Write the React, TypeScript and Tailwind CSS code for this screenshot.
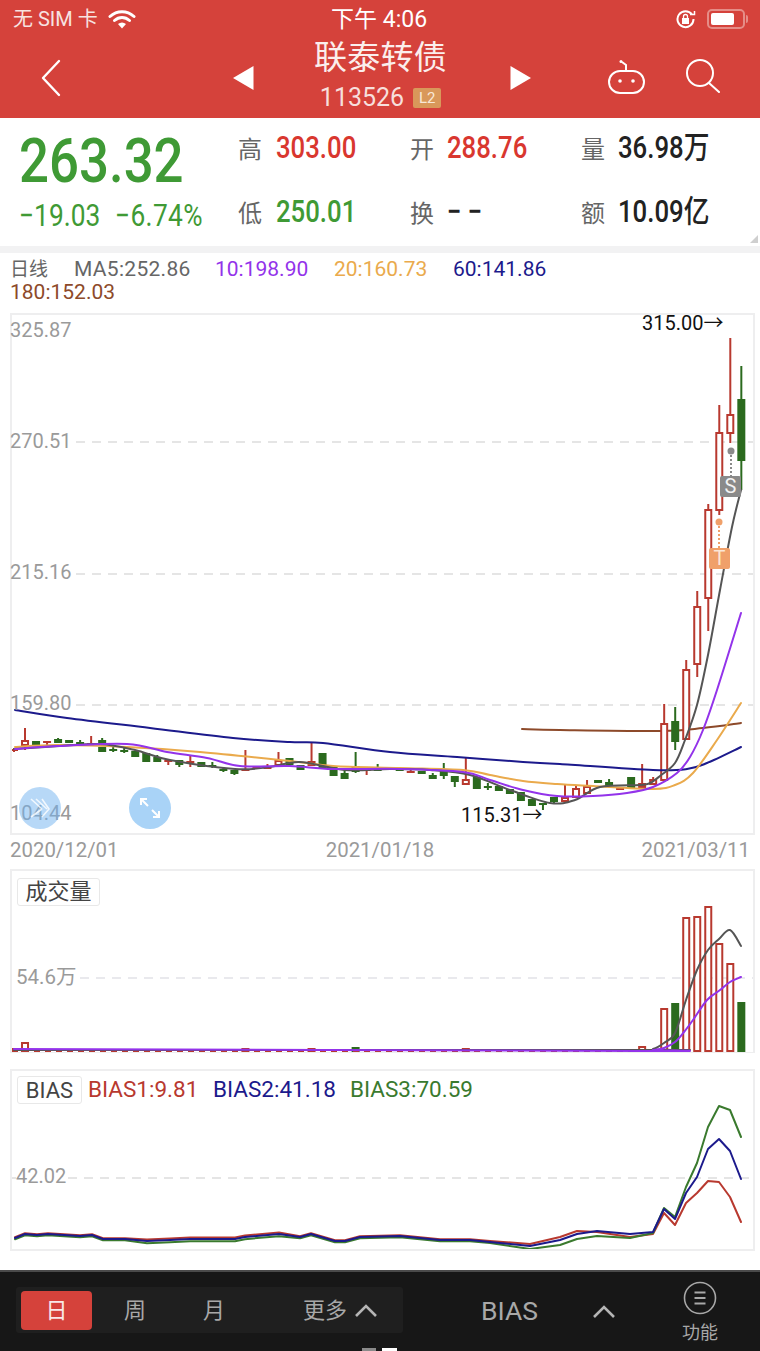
import React from "react";

type C = [number, "r" | "g" | "h", number, number, number, number];
// index, kind, wickTop, bodyTop, bodyBot, wickBot
const candles: C[] = [
  [0,"r",748,749,751,752],[1,"h",728,741,745,750],[2,"g",741,741,745,745],[3,"r",741,741,743,745],
  [4,"g",738,739,743,743],[5,"g",740,740,743,743],[6,"g",740,742,743,746],[7,"r",736,743,744,744],
  [8,"g",738,740,744,744],[8,"g",747,747,752,752],[9,"g",747,749,750,752],[10,"g",748,750,751,753],
  [11,"g",751,751,757,757],[12,"g",753,753,762,762],[13,"g",755,757,762,762],[14,"r",760,760,761,765],
  [15,"g",760,760,765,767],[16,"r",755,761,763,767],[17,"g",762,762,767,767],[18,"g",762,765,766,768],
  [19,"g",767,769,770,772],[20,"g",770,770,774,775],[21,"r",750,769,771,771],[22,"r",766,767,768,769],
  [23,"r",764,767,768,768],[24,"h",752,761,765,765],[25,"g",758,758,765,765],[26,"g",765,765,770,770],
  [27,"r",743,761,766,766],[28,"g",753,753,768,768],[29,"g",767,767,776,776],[30,"g",770,773,779,779],
  [31,"g",752,766,772,773],[32,"r",769,769,771,775],[33,"g",764,769,770,771],[34,"g",768,768,769,769],
  [35,"g",769,769,770,770],[36,"r",769,771,773,773],[37,"g",771,771,774,774],[38,"g",773,775,779,779],
  [39,"g",763,771,776,779],[40,"g",776,776,782,787],[41,"h",758,780,784,784],[42,"g",776,777,789,789],
  [43,"g",783,786,787,790],[44,"g",786,786,791,791],[45,"g",789,789,794,794],[46,"g",792,792,801,801],
  [47,"g",799,799,806,806],[48,"g",803,803,804,810],[49,"g",797,797,802,804],[50,"h",784,798,801,801],
  [51,"h",786,789,797,797],[52,"h",780,787,793,793],[53,"g",780,780,783,783],[54,"g",779,782,786,786],
  [55,"r",788,788,789,789],[56,"g",777,777,789,789],[57,"r",764,783,788,788],[58,"h",777,780,784,784],
  [59,"h",704,724,780,780],[60,"g",707,721,742,750],[61,"h",660,670,739,739],[62,"h",591,607,664,677],
  [63,"h",504,510,598,631],[64,"h",405,433,510,515],[65,"h",338,415,433,443],[66,"g",366,399,461,490],
];
const X = (i: number) => 14 + 11.02 * i;
const RED = "#b8392f";
const GREEN = "#2b6a1e";

const ma5 = "14,749 60,746 100,744 135,750 170,760 235,769 270,767 300,762 345,770 390,769 430,770 470,775 510,790 550,803 575,800 600,787 640,785 650,783 660,776 675,763 685,740 697,705 708,655 720,590 732,527 741,490";
const ma10 = "15,749 57,746 127,744 167,752 207,758 240,766 290,766 333,769 400,769 463,772 490,780 523,790 557,796 593,796 627,793 653,787 677,773 690,757 703,730 717,690 741,613";
const ma20 = "15,747 57,745 127,747 200,752 290,761 333,766 400,768 463,770 490,775 523,781 557,784 593,786 653,789 675,785 693,773 717,740 741,703";
const ma60 = "15,710 67,718 150,728 233,738 290,742 323,743 390,752 457,757 523,762 560,764 653,770 687,769 707,763 741,747";
const ma180 = "522,729 560,730 660,731 703,728 741,723";

const volBars: [number, "h" | "g", number][] = [
  [59,"h",1009],[60,"g",1003],[61,"h",918],[62,"h",917],[63,"h",907],[64,"h",944],[65,"h",964],[66,"g",1002],
  [57,"h",1047],[1,"h",1043],[0,"h",1049],[21,"h",1049],[27,"h",1049],[31,"g",1047],[41,"h",1049],
];
const volGray = "14,1050 640,1050 653,1049 664,1043 675,1033 686,1000 697,970 708,950 719,939 730,930 741,946";
const volPurple = "14,1049 640,1051 653,1050 664,1048 675,1042 684,1032 693,1020 707,1000 720,990 730,982 741,977";

const leftPts: [number, number][] = [[15,1238],[25,1234],[37,1235],[48,1234],[80,1236],[92,1235],[103,1239],[125,1239],[147,1241],[170,1240],[190,1239],[235,1239],[245,1237],[279,1234],[300,1237],[311,1234],[335,1241],[345,1241],[360,1237],[400,1236],[440,1240],[470,1240]];
const left = (d: number) =>
  leftPts.map(([x, y]) => `${x},${y + (x > 130 && x < 300 ? d * 1.8 : d)}`).join(" ") + " ";
const b3 = left(1.2) + "490,1243 530,1249 560,1245 577,1239 597,1236 630,1238 653,1233 664,1208 675,1217 686,1187 697,1163 708,1127 719,1106 730,1110 741,1137";
const b2 = left(0) + "490,1242 530,1246 560,1240 577,1234 597,1231 630,1234 653,1232 664,1209 675,1219 686,1193 697,1177 708,1149 719,1139 730,1151 741,1179";
const b1 = left(-0.8) + "490,1241 530,1244 560,1237 577,1231 597,1232 630,1237 653,1234 664,1213 675,1225 686,1203 697,1193 708,1181 719,1182 730,1197 741,1222";

function smooth(pts: string) {
  const p = pts.trim().split(" ").map((s) => s.split(",").map(Number));
  let d = `M${p[0][0]} ${p[0][1]}`;
  for (let i = 0; i < p.length - 1; i++) {
    const a = p[Math.max(i - 1, 0)], b = p[i], c = p[i + 1], e = p[Math.min(i + 2, p.length - 1)];
    d += `C${b[0] + (c[0] - a[0]) / 6} ${b[1] + (c[1] - a[1]) / 6} ${c[0] - (e[0] - b[0]) / 6} ${c[1] - (e[1] - b[1]) / 6} ${c[0]} ${c[1]}`;
  }
  return d;
}

function Curve({ pts, color, w = 2 }: { pts: string; color: string; w?: number }) {
  return <path d={smooth(pts)} fill="none" stroke={color} strokeWidth={w} strokeLinecap="round" />;
}
function Line({ pts, color, w = 2 }: { pts: string; color: string; w?: number }) {
  return <polyline points={pts} fill="none" stroke={color} strokeWidth={w} strokeLinejoin="round" strokeLinecap="round" />;
}

function Quote({ label, value, color, narrow }: { label: string; value: string; color: string; narrow?: boolean }) {
  return (
    <div className="flex items-center h-[64px] mt-[-2px] mb-[2px]">
      <span className={`${narrow ? "w-[37px]" : "w-[38px]"} text-[24px] text-[#666666] mt-[4px]`}>{label}</span>
      <span className={`text-[31px] font-medium origin-left scale-x-[0.83] whitespace-nowrap ${color}`}>{value}</span>
    </div>
  );
}

export default function App() {
  return (
    <div className="relative w-[760px] h-[1351px] bg-white overflow-hidden flex flex-col font-['Roboto','Noto_Sans_CJK_SC',sans-serif]">
      {/* Header */}
      <header className="h-[118px] bg-[#d5423b] text-white flex flex-col shrink-0">
        <div className="h-[38px] flex items-center justify-between pl-[13px] pr-[12px] relative">
          <div className="flex items-center gap-[10px]">
            <span className="text-[20px] text-[#f7e3e1]">无 SIM 卡</span>
            <svg width="28" height="22" viewBox="0 0 28 22" fill="none" stroke="#fff" strokeLinecap="round">
              <path d="M2 8.5C9 2 19 2 26 8.5" strokeWidth="3" />
              <path d="M6.5 12.5C11 8.5 17 8.5 21.5 12.5" strokeWidth="3" />
              <path d="M14 20.5l-4-4.5c2.5-2 5.5-2 8 0z" fill="#fff" stroke="none" />
            </svg>
          </div>
          <span className="absolute left-[331px] top-[6px] text-[23px] leading-[27px] whitespace-nowrap">下午 4:06</span>
          <div className="flex items-center gap-[11px]">
            <svg width="21" height="20" viewBox="0 0 21 20" fill="none" stroke="#fff" strokeWidth="2">
              <path d="M17 5.5A8 8 0 1 0 18.5 10" />
              <path d="M15 5.5h4.5V2" strokeWidth="1.5" />
              <rect x="7" y="9" width="7" height="6" fill="#fff" stroke="none" />
              <path d="M8.5 9V7.5a2 2 0 0 1 4 0V9" strokeWidth="1.3" />
            </svg>
            <div className="flex items-center">
              <div className="w-[38px] h-[20px] rounded-[5px] border-2 border-[#e58d87] p-[2px]">
                <div className="w-[23px] h-full rounded-[2px] bg-white" />
              </div>
              <div className="w-[2px] h-[8px] ml-[1px] rounded-r bg-[#e58d87]" />
            </div>
          </div>
        </div>
        <div className="flex-1 flex items-center relative">
          <svg className="ml-[40px]" width="22" height="38" viewBox="0 0 22 38" fill="none" stroke="#fff" strokeWidth="2.4" strokeLinecap="round" strokeLinejoin="round">
            <path d="M19 2L3 19l16 17" />
          </svg>
          <svg className="ml-[171px]" width="21" height="24" viewBox="0 0 21 24" fill="#fff"><path d="M20.5 0v24L0 12z" /></svg>
          <div className="w-[256px] flex flex-col items-center pr-[3px]">
            <span className="text-[33px] leading-[38px] mt-[-6px] tracking-[0.3px] whitespace-nowrap text-[#fbeeed]">联泰转债</span>
            <div className="flex items-center gap-[9px] mt-[7px]">
              <span className="text-[25px] leading-[28px] text-[#f7dfdc]">113526</span>
              <span className="w-[28px] h-[20px] bg-[#d9985a] rounded-[2px] text-[15px] leading-[20px] text-center text-[#f8e8d8]">L2</span>
            </div>
          </div>
          <svg width="21" height="24" viewBox="0 0 21 24" fill="#fff"><path d="M.5 0v24L21 12z" /></svg>
          <svg className="ml-[76px] mt-[-2px]" width="40" height="36" viewBox="0 0 40 36" fill="none" stroke="#fff" strokeWidth="2">
            <rect x="2" y="12" width="35" height="22" rx="11" />
            <path d="M19 12V6l-4-3" />
            <circle cx="14" cy="2.5" r="1.5" fill="#fff" stroke="none" />
            <circle cx="13" cy="22" r="1.8" fill="#fff" stroke="none" />
            <circle cx="26" cy="22" r="1.8" fill="#fff" stroke="none" />
          </svg>
          <svg className="ml-[38px] mt-[-4px]" width="36" height="34" viewBox="0 0 36 34" fill="none" stroke="#fff" strokeWidth="2" strokeLinecap="round">
            <circle cx="15" cy="14" r="13" />
            <path d="M24 24l10 9" />
          </svg>
        </div>
      </header>

      {/* Quote */}
      <section className="h-[128px] shrink-0 relative flex">
        <div className="w-[238px] pl-[19px] shrink-0">
          <div className="text-[61px] leading-[62px] mt-[12px] font-medium text-[#3f9a35] origin-left scale-x-[0.865] whitespace-nowrap">263.32</div>
          <div className="flex text-[31px] leading-[32px] mt-[8px] text-[#3f9a35] origin-left scale-x-[0.85] whitespace-nowrap">
            <span className="w-[113px]">−19.03</span>
            <span className="tracking-[0.4px]">−6.74%</span>
          </div>
        </div>
        <div className="w-[172px] shrink-0">
          <Quote label="高" value="303.00" color="text-[#d9372f]" />
          <Quote label="低" value="250.01" color="text-[#3f9a35]" />
        </div>
        <div className="w-[171px] shrink-0">
          <Quote narrow label="开" value="288.76" color="text-[#d9372f]" />
          <Quote narrow label="换" value="− −" color="text-[#222222]" />
        </div>
        <div className="flex-1">
          <Quote narrow label="量" value="36.98万" color="text-[#222222]" />
          <Quote narrow label="额" value="10.09亿" color="text-[#222222]" />
        </div>
        <div className="absolute right-[2px] bottom-[3px] w-0 h-0 border-l-[8px] border-l-transparent border-b-[8px] border-b-[#cfcfcf]" />
      </section>
      <div className="h-[7px] bg-[#f2f2f3] shrink-0" />

      {/* Legend */}
      <div className="h-[60px] shrink-0 pl-[10px] pt-[5px] text-[21px] leading-[23px] whitespace-nowrap">
        <div className="flex">
          <span className="w-[64px] text-[19px] text-[#666666]">日线</span>
          <span className="w-[141px] text-[#666666] tracking-[0.3px]">MA5:252.86</span>
          <span className="w-[119px] text-[#9333ea]">10:198.90</span>
          <span className="w-[119px] text-[#eaaa4c]">20:160.73</span>
          <span className="text-[#1c1a8c]">60:141.86</span>
        </div>
        <div className="text-[#8d4a2a]">180:152.03</div>
      </div>

      {/* Price chart */}
      <div className="relative ml-[10px] w-[745px] h-[522px] shrink-0 border-2 border-[#eeeeef] text-[20px] leading-[24px] text-[#9a9a9a]">
        <svg width="741" height="518" viewBox="12 315 741 518" className="block">
          <g stroke="#dddddd" strokeWidth="1.5" strokeDasharray="9 7">
            <line x1="76" x2="753" y1="442" y2="442" />
            <line x1="76" x2="753" y1="574" y2="574" />
            <line x1="76" x2="753" y1="705" y2="705" />
          </g>
          <Curve pts={ma180} color="#8d4a2a" />
          {candles.map(([i, k, wt, bt, bb, wb], n) => {
            const c = k === "g" ? GREEN : RED;
            const x = X(i);
            return (
              <g key={n}>
                <line x1={x} x2={x} y1={wt} y2={wb} stroke={c} strokeWidth="2" />
                {k === "h" ? (
                  <rect x={x - 3} y={bt} width={6} height={bb - bt} fill="#fff" stroke={c} strokeWidth="2" />
                ) : (
                  <rect x={x - 4} y={bt} width={8} height={Math.max(bb - bt, 2)} fill={c} />
                )}
              </g>
            );
          })}
          <Curve pts={ma60} color="#1c1a8c" />
          <Curve pts={ma20} color="#eaaa4c" />
          <Curve pts={ma5} color="#555555" />
          <Curve pts={ma10} color="#9333ea" />
          <line x1="731" x2="731" y1="451" y2="476" stroke="#8a8a8a" strokeWidth="2" strokeDasharray="2 2" />
          <circle cx="731" cy="451" r="3.5" fill="#8a8a8a" />
          <line x1="719" x2="719" y1="522" y2="548" stroke="#f0a06a" strokeWidth="2" strokeDasharray="2 2" />
          <circle cx="719" cy="522" r="3.5" fill="#f0a06a" />
        </svg>
        <span className="absolute left-[-2px] top-[3px]">325.87</span>
        <span className="absolute left-[-2px] top-[114px]">270.51</span>
        <span className="absolute left-[-2px] top-[245px]">215.16</span>
        <span className="absolute left-[-2px] top-[376px]">159.80</span>
        <span className="absolute left-[-2px] top-[486px]">104.44</span>
        <span className="absolute left-[630px] top-[-4px] text-[20px] text-[#111111] whitespace-nowrap">315.00→</span>
        <span className="absolute left-[449px] top-[488px] text-[20px] text-[#111111] whitespace-nowrap">115.31→</span>
        <span className="absolute left-[708px] top-[161px] w-[21px] h-[21px] rounded-[2px] bg-[#8a8a8a] text-[#f2f2f2] text-[20px] leading-[21px] text-center">S</span>
        <span className="absolute left-[697px] top-[233px] w-[21px] h-[21px] rounded-[2px] bg-[#f0a06a] text-[#fbe6d6] text-[20px] leading-[21px] text-center">T</span>
        <div className="absolute left-[7px] top-[472px] w-[42px] h-[42px] rounded-full bg-[#6fb2f0]/50 flex items-center justify-center">
          <svg width="24" height="24" viewBox="0 0 24 24" fill="none" stroke="#fff" strokeOpacity="0.8" strokeWidth="1.6">
            <path d="M3 3l11 10M8 3l11 10M3 21L14 13M14 3l7 10-7 8" />
          </svg>
        </div>
        <div className="absolute left-[117px] top-[472px] w-[42px] h-[42px] rounded-full bg-[#a9d3f7] flex items-center justify-center">
          <svg width="24" height="24" viewBox="0 0 24 24" fill="none" stroke="#fff" strokeWidth="2">
            <path d="M3 9V3h6M3 3l7 7M21 15v6h-6M21 21l-7-7" />
          </svg>
        </div>
      </div>

      {/* Dates */}
      <div className="h-[34px] shrink-0 pl-[10px] pr-[10px] pt-[3px] flex justify-between text-[20.4px] leading-[24px] text-[#9a9a9a]">
        <span>2020/12/01</span>
        <span>2021/01/18</span>
        <span>2021/03/11</span>
      </div>

      {/* Volume */}
      <div className="relative ml-[10px] w-[745px] h-[184px] shrink-0 border-2 border-b-[1px] border-[#eeeeef]">
        <svg width="741" height="181" viewBox="12 871 741 181" className="block">
          <line x1="80" x2="753" y1="978" y2="978" stroke="#e2e2e8" strokeWidth="1.5" strokeDasharray="9 7" />
          {volBars.map(([i, k, t], n) =>
            k === "g" ? (
              <rect key={n} x={X(i) - 4} y={t} width={8} height={1052 - t} fill={GREEN} />
            ) : (
              <rect key={n} x={X(i) - 3} y={t} width={6} height={1051 - t} fill="#fff" stroke={RED} strokeWidth="2" />
            )
          )}
          <line x1="12" x2="653" y1="1051" y2="1051" stroke={RED} strokeWidth="2" strokeDasharray="6 5" />
          <Curve pts={volGray} color="#555555" />
          <Curve pts={volPurple} color="#9333ea" />
        </svg>
        <span className="absolute left-[5px] top-[7px] h-[28px] w-[83px] border border-[#e8e8e8] rounded-[3px] text-[22px] leading-[26px] text-center text-[#444444]">成交量</span>
        <span className="absolute left-[4px] top-[94px] text-[20.5px] leading-[24px] text-[#9a9a9a]">54.6万</span>
      </div>
      <div className="h-[16px] shrink-0" />

      {/* BIAS */}
      <div className="relative ml-[10px] w-[745px] h-[182px] shrink-0 border-2 border-[#eeeeef]">
        <svg width="741" height="178" viewBox="12 1071 741 178" className="block">
          <line x1="12" x2="16" y1="1178" y2="1178" stroke="#dddddd" strokeWidth="1.5" />
          <line x1="68" x2="753" y1="1178" y2="1178" stroke="#dddddd" strokeWidth="1.5" strokeDasharray="9 7" />
          <Line pts={b1} color="#b8392f" />
          <Line pts={b3} color="#3a7a2e" />
          <Line pts={b2} color="#1c1a8c" />
        </svg>
        <span className="absolute left-[5px] top-[5px] h-[28px] w-[65px] border border-[#e8e8e8] rounded-[3px] text-[22px] leading-[27px] text-center text-[#444444]">BIAS</span>
        <div className="absolute left-[76px] top-[6px] flex text-[22.5px] leading-[24px] whitespace-nowrap">
          <span className="w-[125px] text-[#b8392f]">BIAS1:9.81</span>
          <span className="w-[137px] text-[#1c1a8c]">BIAS2:41.18</span>
          <span className="text-[#3a7a2e]">BIAS3:70.59</span>
        </div>
        <span className="absolute left-[4px] top-[93px] text-[20px] leading-[24px] text-[#9a9a9a]">42.02</span>
      </div>
      <div className="flex-1" />

      {/* Bottom bar */}
      <footer className="relative h-[81px] shrink-0 bg-[#171717] border-t-2 border-[#4a4a4a] flex text-[#a8a8a8]">
        <div className="ml-[16px] mt-[15px] w-[387px] h-[46px] rounded-[3px] bg-[#1f1f1f] flex items-center pl-[5px] text-[22px]">
          <span className="w-[71px] h-[39px] rounded-[4px] bg-[#d5423b] text-[#f8e9e8] text-center leading-[39px]">日</span>
          <span className="w-[86px] text-center">周</span>
          <span className="w-[72px] text-center">月</span>
          <span className="ml-[53px] whitespace-nowrap">更多</span>
          <svg className="ml-[7px]" width="24" height="14" viewBox="0 0 24 14" fill="none" stroke="#b5b5b5" strokeWidth="2.6"><path d="M2 13L12 3l10 10" /></svg>
        </div>
        <span className="ml-[78px] mt-[21px] text-[26.5px] leading-[36px]">BIAS</span>
        <svg className="ml-[54px] mt-[32px]" width="24" height="14" viewBox="0 0 24 14" fill="none" stroke="#b5b5b5" strokeWidth="2.6"><path d="M2 13L12 3l10 10" /></svg>
        <div className="ml-[66px] mt-[9px] w-[36px] flex flex-col items-center">
          <svg width="34" height="34" viewBox="0 0 34 34" fill="none" stroke="#a8a8a8">
            <circle cx="17" cy="17" r="15.5" strokeWidth="1.6" />
            <path d="M11.5 11.5h11M11.5 17h11M11.5 22.5h11" strokeWidth="2" />
          </svg>
          <span className="text-[18px] leading-[22px] mt-[7px] whitespace-nowrap">功能</span>
        </div>
        <div className="absolute left-[362px] bottom-0 w-[14px] h-[3px] bg-[#8a8a8a]" />
        <div className="absolute left-[382px] bottom-0 w-[15px] h-[3px] bg-white" />
      </footer>
    </div>
  );
}
